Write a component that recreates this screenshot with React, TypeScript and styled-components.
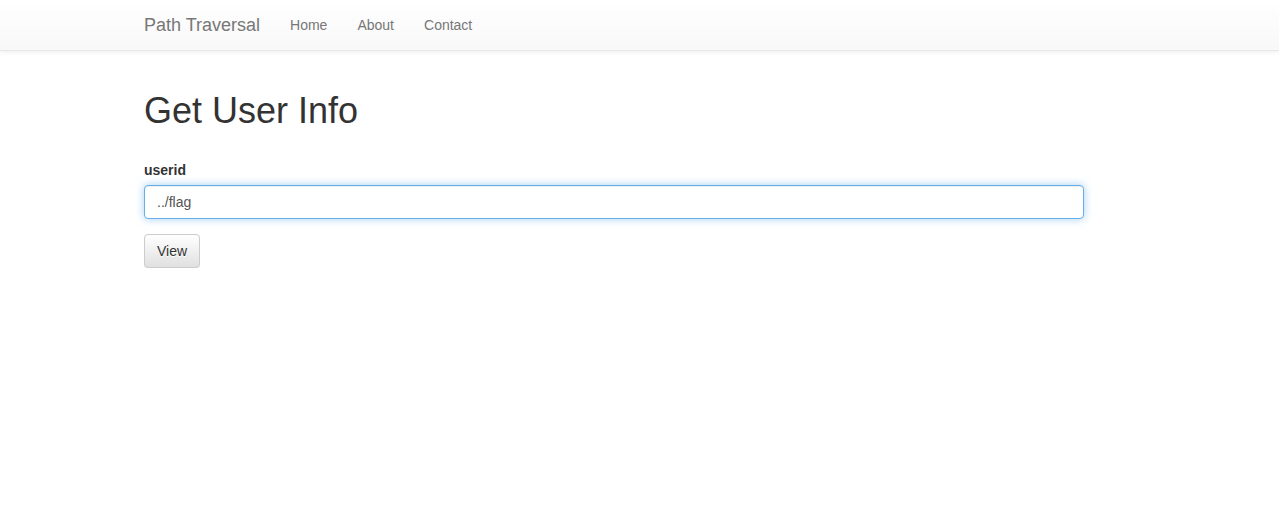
import React from "react";
import styled, { createGlobalStyle } from "styled-components";

const GlobalStyle = createGlobalStyle`
    * {
        box-sizing: border-box;
    }
    html, body {
        margin: 0;
        padding: 0;
        background: #fff;
    }
    body {
        font-family: "Liberation Sans", Arial, Helvetica, sans-serif;
        font-size: 14px;
        line-height: 1.42857143;
        color: #333;
    }
`;

const Navbar = styled.nav`
    height: 51px;
    margin-bottom: 20px;
    background-image: linear-gradient(to bottom, #fff 0, #f8f8f8 100%);
    border-bottom: 1px solid #e7e7e7;
    box-shadow: inset 0 1px 0 rgba(255, 255, 255, 0.15),
        0 1px 5px rgba(0, 0, 0, 0.075);
`;

const Container = styled.div`
    width: 970px;
    margin: 0 auto 0 129px;
    padding: 0 15px;
`;

const NavInner = styled(Container)`
    display: flex;
    align-items: center;
`;

const Main = styled(Container)`
    padding-top: 20px;
`;

const Brand = styled.a`
    display: block;
    height: 50px;
    padding: 15px;
    margin-left: -15px;
    font-size: 18px;
    line-height: 20px;
    color: #777;
    text-decoration: none;
    text-shadow: 0 1px 0 rgba(255, 255, 255, 0.25);
`;

const NavList = styled.ul`
    display: flex;
    list-style: none;
    margin: 0;
    padding: 0;
`;

const NavLink = styled.a`
    display: block;
    padding: 15px;
    line-height: 20px;
    color: #777;
    text-decoration: none;
    text-shadow: 0 1px 0 rgba(255, 255, 255, 0.25);
    &:hover {
        color: #333;
    }
`;

const Title = styled.h1`
    margin: 0 0 29.5px;
    font-size: 36px;
    font-weight: 500;
    line-height: 1.1;
    color: #333;
`;

const FormGroup = styled.div`
    margin-bottom: 15px;
`;

const Label = styled.label`
    display: inline-block;
    margin-bottom: 5px;
    font-weight: 700;
`;

const Input = styled.input`
    display: block;
    width: 100%;
    height: 34px;
    padding: 6px 12px;
    font-family: inherit;
    font-size: 14px;
    line-height: 1.42857143;
    color: #555;
    background: #fff;
    border: 1px solid #66afe9;
    border-radius: 4px;
    outline: 0;
    box-shadow: inset 0 1px 1px rgba(0, 0, 0, 0.075),
        0 0 8px rgba(102, 175, 233, 0.6);
    caret-color: #333;
`;

const Button = styled.button`
    display: inline-block;
    padding: 6px 12px;
    font-family: inherit;
    font-size: 14px;
    line-height: 1.42857143;
    color: #333;
    background-image: linear-gradient(to bottom, #fff 0, #e0e0e0 100%);
    border: 1px solid #ccc;
    border-radius: 4px;
    text-shadow: 0 1px 0 #fff;
    box-shadow: inset 0 1px 0 rgba(255, 255, 255, 0.15),
        0 1px 1px rgba(0, 0, 0, 0.075);
    cursor: pointer;
`;

const links = ["Home", "About", "Contact"];

function App() {
    return (
        <>
            <GlobalStyle />
            <Navbar>
                <NavInner>
                    <Brand href="#">Path Traversal</Brand>
                    <NavList>
                        {links.map((l) => (
                            <li key={l}>
                                <NavLink href="#">{l}</NavLink>
                            </li>
                        ))}
                    </NavList>
                </NavInner>
            </Navbar>
            <Main>
                <Title>Get User Info</Title>
                <form onSubmit={(e) => e.preventDefault()}>
                    <FormGroup>
                        <Label htmlFor="userid">userid</Label>
                        <Input id="userid" name="userid" defaultValue="../flag" autoFocus />
                    </FormGroup>
                    <Button type="submit">View</Button>
                </form>
            </Main>
        </>
    );
}

export default App;
